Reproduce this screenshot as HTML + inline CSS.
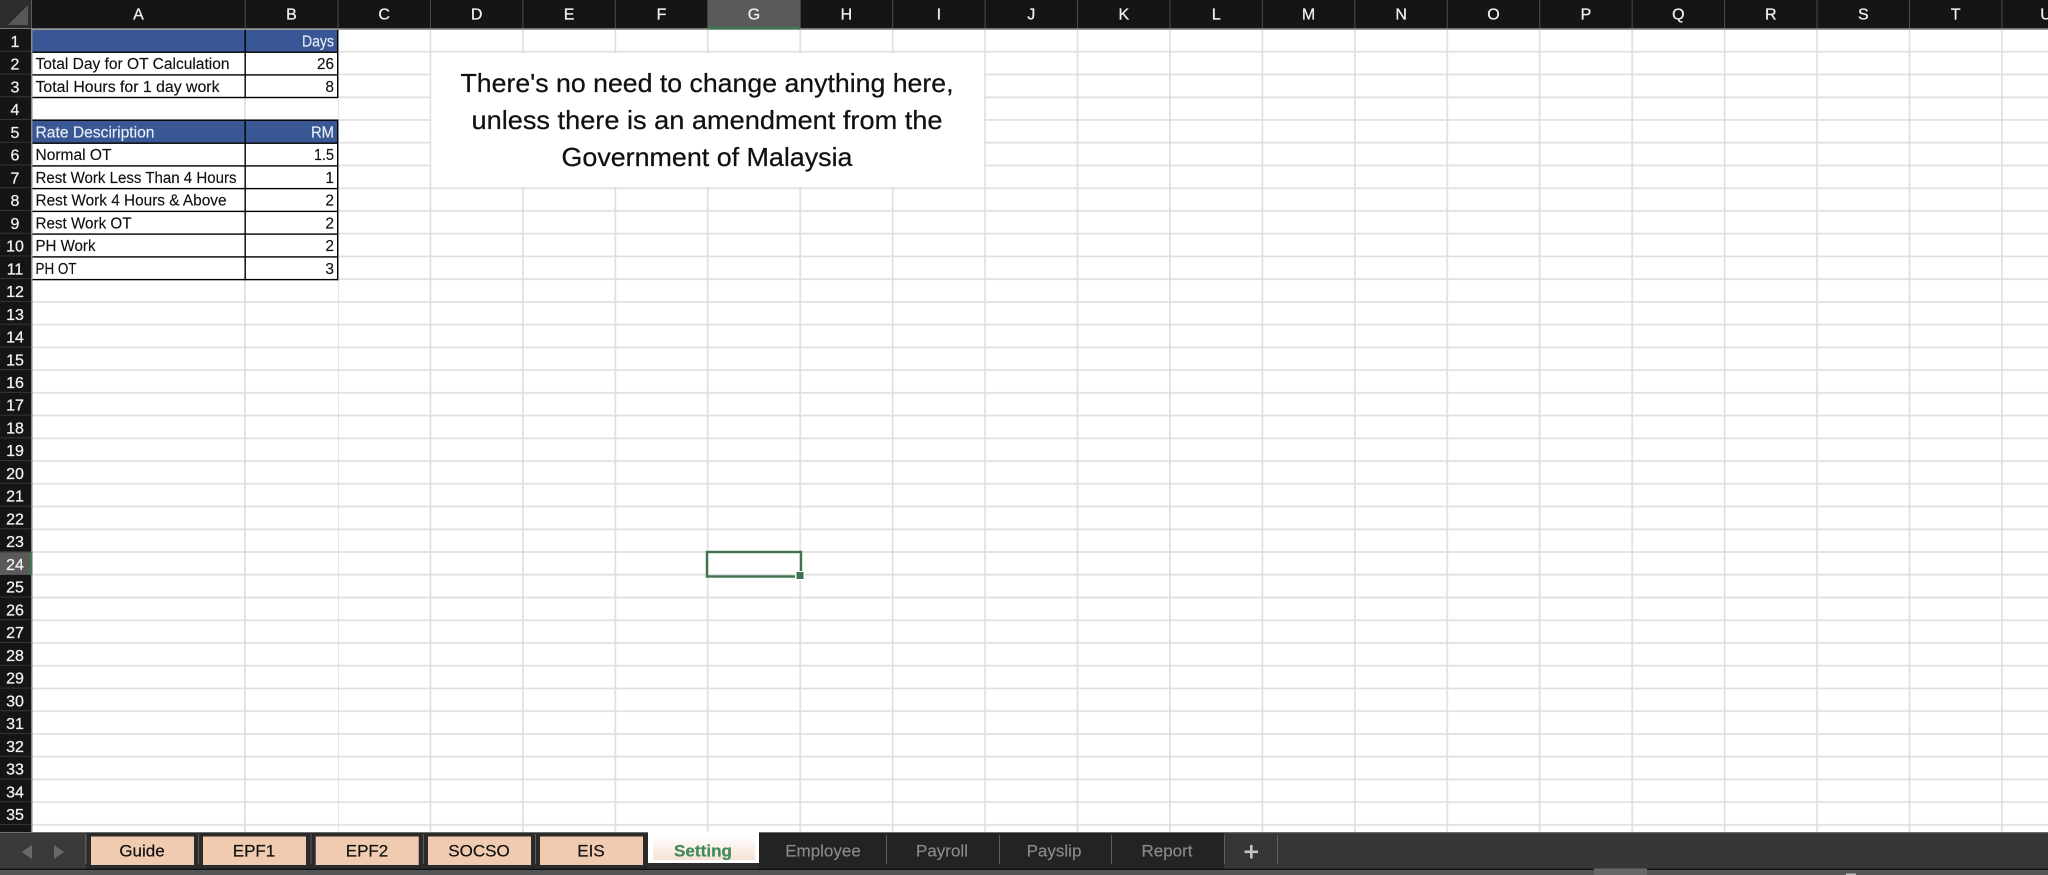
<!DOCTYPE html>
<html lang="en">
<head>
<meta charset="utf-8">
<title>Setting</title>
<style>
html,body{margin:0;padding:0;width:2048px;height:875px;overflow:hidden;background:#fff}
svg{display:block;position:absolute;left:0;top:0;filter:blur(.35px)}
text{font-family:"Liberation Sans",Arial,sans-serif}
.ch{font-size:16px;fill:#f2f2f2;stroke:#f2f2f2;stroke-width:.25px;text-anchor:middle}
.rh{font-size:16px;fill:#f2f2f2;stroke:#f2f2f2;stroke-width:.25px;text-anchor:middle}
.c{font-size:15.5px;fill:#111;stroke:#111;stroke-width:.15px}
.n{font-size:15.5px;fill:#111;stroke:#111;stroke-width:.15px;text-anchor:end}
.w{fill:#e8edf6;stroke:#e8edf6}
.tab{font-size:17px;fill:#111;stroke:#111;stroke-width:.2px;text-anchor:middle}
.off{font-size:17px;fill:#8a8a8a;stroke:#8a8a8a;stroke-width:.15px;text-anchor:middle}
.note{font-size:26px;fill:#111;stroke:#111;stroke-width:.25px;text-anchor:middle}
</style>
</head>
<body>
<svg width="2048" height="875" viewBox="0 0 2048 875" xmlns="http://www.w3.org/2000/svg">
<defs>
<pattern id="g" patternUnits="userSpaceOnUse" x="338" y="29" width="92.44" height="22.74">
<rect x="0" y="0" width="92.44" height="22.74" fill="#fff"/>
<rect x="0" y="-.8" width="92.44" height="1.6" fill="#dedede"/>
<rect x="0" y="21.94" width="92.44" height="1.6" fill="#dedede"/>
<rect x="-.8" y="0" width="1.6" height="22.74" fill="#dedede"/>
<rect x="91.64" y="0" width="1.6" height="22.74" fill="#dedede"/>
</pattern>
<pattern id="h" patternUnits="userSpaceOnUse" x="0" y="29" width="100" height="22.74">
<rect x="0" y="0" width="100" height="22.74" fill="#fff"/>
<rect x="0" y="-.8" width="100" height="1.6" fill="#dedede"/>
<rect x="0" y="21.94" width="100" height="1.6" fill="#dedede"/>
</pattern>
<pattern id="rs" patternUnits="userSpaceOnUse" x="0" y="29" width="31" height="22.74">
<rect width="31" height="22.74" fill="#151515"/>
<rect y="21.9" width="31" height="1" fill="#3c3c3c"/>
</pattern>
<pattern id="cs" patternUnits="userSpaceOnUse" x="338" y="0" width="92.44" height="29">
<rect width="92.44" height="29" fill="#151515"/>
<rect x="-0.5" width="1" height="29" fill="#4c4c4c"/>
<rect x="91.94" width="1" height="29" fill="#4c4c4c"/>
</pattern>
<linearGradient id="act" x1="0" y1="0" x2="0" y2="1">
<stop offset="0" stop-color="#ffffff"/>
<stop offset="1" stop-color="#f6e2d4"/>
</linearGradient>
</defs>

<!-- sheet grid -->
<rect x="32" y="29" width="306" height="803" fill="url(#h)"/>
<rect x="244.2" y="29" width="1.6" height="803" fill="#dedede"/>
<rect x="338" y="29" width="1710" height="803" fill="url(#g)"/>

<!-- table 1 -->
<rect x="32" y="30" width="306" height="22" fill="#395794"/>
<rect x="32" y="52" width="306" height="45" fill="#fff"/>
<g fill="#000">
<rect x="32" y="51.5" width="306" height="1.4"/>
<rect x="32" y="74.2" width="306" height="1.4"/>
<rect x="32" y="96.8" width="306" height="1.4"/>
<rect x="244.5" y="29" width="1.4" height="69"/>
<rect x="337" y="29" width="1.4" height="69"/>
</g>
<!-- table 2 -->
<rect x="32" y="120" width="306" height="23" fill="#395794"/>
<rect x="32" y="143" width="306" height="136" fill="#fff"/>
<g fill="#000">
<rect x="32" y="119.5" width="306" height="1.4"/>
<rect x="32" y="142.5" width="306" height="1.4"/>
<rect x="32" y="165.2" width="306" height="1.4"/>
<rect x="32" y="187.9" width="306" height="1.4"/>
<rect x="32" y="210.7" width="306" height="1.4"/>
<rect x="32" y="233.4" width="306" height="1.4"/>
<rect x="32" y="256.2" width="306" height="1.4"/>
<rect x="32" y="278.9" width="306" height="1.4"/>
<rect x="244.5" y="119.5" width="1.4" height="160.8"/>
<rect x="337" y="119.5" width="1.4" height="160.8"/>
</g>

<!-- column headers -->
<rect x="338" y="0" width="1710" height="29" fill="url(#cs)"/>
<rect x="0" y="0" width="338" height="29" fill="#151515"/>
<rect x="0" y="0" width="31" height="29" fill="#2c2c2c"/>
<polygon points="8,25 28,5 28,25" fill="#585858"/>
<rect x="31" y="0" width="1" height="29" fill="#5c5c5c"/>
<rect x="244.7" y="0" width="1" height="29" fill="#4c4c4c"/>
<rect x="337.5" y="0" width="1" height="29" fill="#4c4c4c"/>
<rect x="707.8" y="0" width="92.44" height="27" fill="#5a5a5a"/>
<rect x="0" y="28.2" width="2048" height="1.6" fill="#8a8a8a"/>
<rect x="707.8" y="27" width="92.44" height="2.4" fill="#3f7a52"/>

<text class="ch" x="138.5" y="19.5">A</text>
<text class="ch" x="291.5" y="19.5">B</text>
<text class="ch" x="384.2" y="19.5">C</text>
<text class="ch" x="476.7" y="19.5">D</text>
<text class="ch" x="569.1" y="19.5">E</text>
<text class="ch" x="661.5" y="19.5">F</text>
<text class="ch" x="754" y="19.5">G</text>
<text class="ch" x="846.4" y="19.5">H</text>
<text class="ch" x="938.9" y="19.5">I</text>
<text class="ch" x="1031.3" y="19.5">J</text>
<text class="ch" x="1123.8" y="19.5">K</text>
<text class="ch" x="1216.2" y="19.5">L</text>
<text class="ch" x="1308.6" y="19.5">M</text>
<text class="ch" x="1401.1" y="19.5">N</text>
<text class="ch" x="1493.5" y="19.5">O</text>
<text class="ch" x="1586" y="19.5">P</text>
<text class="ch" x="1678.4" y="19.5">Q</text>
<text class="ch" x="1770.8" y="19.5">R</text>
<text class="ch" x="1863.3" y="19.5">S</text>
<text class="ch" x="1955.7" y="19.5">T</text>
<text class="ch" x="2046" y="19.5">U</text>

<!-- row headers -->
<rect x="0" y="29" width="31" height="803" fill="url(#rs)"/>
<rect x="31" y="29" width="1.5" height="803" fill="#8a8a8a"/>
<rect x="0" y="552.2" width="31" height="22.7" fill="#5a5a5a"/>
<rect x="30" y="552.2" width="2.5" height="22.7" fill="#3f7a52"/>

<text class="rh" x="15" y="46.9">1</text>
<text class="rh" x="15" y="69.6">2</text>
<text class="rh" x="15" y="92.4">3</text>
<text class="rh" x="15" y="115.1">4</text>
<text class="rh" x="15" y="137.9">5</text>
<text class="rh" x="15" y="160.6">6</text>
<text class="rh" x="15" y="183.3">7</text>
<text class="rh" x="15" y="206.1">8</text>
<text class="rh" x="15" y="228.8">9</text>
<text class="rh" x="15" y="251.6">10</text>
<text class="rh" x="15" y="274.3">11</text>
<text class="rh" x="15" y="297">12</text>
<text class="rh" x="15" y="319.8">13</text>
<text class="rh" x="15" y="342.5">14</text>
<text class="rh" x="15" y="365.3">15</text>
<text class="rh" x="15" y="388">16</text>
<text class="rh" x="15" y="410.7">17</text>
<text class="rh" x="15" y="433.5">18</text>
<text class="rh" x="15" y="456.2">19</text>
<text class="rh" x="15" y="479">20</text>
<text class="rh" x="15" y="501.7">21</text>
<text class="rh" x="15" y="524.4">22</text>
<text class="rh" x="15" y="547.2">23</text>
<text class="rh" x="15" y="569.9">24</text>
<text class="rh" x="15" y="592.7">25</text>
<text class="rh" x="15" y="615.4">26</text>
<text class="rh" x="15" y="638.1">27</text>
<text class="rh" x="15" y="660.9">28</text>
<text class="rh" x="15" y="683.6">29</text>
<text class="rh" x="15" y="706.4">30</text>
<text class="rh" x="15" y="729.1">31</text>
<text class="rh" x="15" y="751.8">32</text>
<text class="rh" x="15" y="774.6">33</text>
<text class="rh" x="15" y="797.3">34</text>
<text class="rh" x="15" y="820.1">35</text>

<text class="n w" x="334" y="46.5" textLength="32" lengthAdjust="spacingAndGlyphs">Days</text>
<text class="c" x="35.5" y="69" textLength="194" lengthAdjust="spacingAndGlyphs">Total Day for OT Calculation</text>
<text class="n" x="334" y="69" textLength="17" lengthAdjust="spacingAndGlyphs">26</text>
<text class="c" x="35.5" y="92" textLength="184" lengthAdjust="spacingAndGlyphs">Total Hours for 1 day work</text>
<text class="n" x="334" y="92">8</text>
<text class="c w" x="35.5" y="137.4" textLength="119" lengthAdjust="spacingAndGlyphs">Rate Desciription</text>
<text class="n w" x="334" y="137.4" textLength="23" lengthAdjust="spacingAndGlyphs">RM</text>
<text class="c" x="35.5" y="160" textLength="76" lengthAdjust="spacingAndGlyphs">Normal OT</text>
<text class="n" x="334" y="160" textLength="20" lengthAdjust="spacingAndGlyphs">1.5</text>
<text class="c" x="35.5" y="183" textLength="201" lengthAdjust="spacingAndGlyphs">Rest Work Less Than 4 Hours</text>
<text class="n" x="334" y="183">1</text>
<text class="c" x="35.5" y="205.6" textLength="191" lengthAdjust="spacingAndGlyphs">Rest Work 4 Hours &amp; Above</text>
<text class="n" x="334" y="205.6">2</text>
<text class="c" x="35.5" y="228.3" textLength="96" lengthAdjust="spacingAndGlyphs">Rest Work OT</text>
<text class="n" x="334" y="228.3">2</text>
<text class="c" x="35.5" y="251" textLength="60" lengthAdjust="spacingAndGlyphs">PH Work</text>
<text class="n" x="334" y="251">2</text>
<text class="c" x="35.5" y="273.8" textLength="41" lengthAdjust="spacingAndGlyphs">PH OT</text>
<text class="n" x="334" y="273.8">3</text>

<!-- note box -->
<rect x="431.4" y="53" width="552.7" height="134" fill="#fff"/>
<text class="note" x="707" y="92" textLength="493" lengthAdjust="spacingAndGlyphs">There's no need to change anything here,</text>
<text class="note" x="707" y="129" textLength="471" lengthAdjust="spacingAndGlyphs">unless there is an amendment from the</text>
<text class="note" x="707" y="166" textLength="291" lengthAdjust="spacingAndGlyphs">Government of Malaysia</text>

<!-- selection -->
<rect x="707" y="552" width="94" height="24.5" fill="none" stroke="#3f7350" stroke-width="2.4"/>
<rect x="795" y="571" width="9.5" height="9" fill="#fff"/>
<rect x="796.5" y="572" width="7" height="7" fill="#3f7350"/>

<!-- tab bar -->
<rect x="0" y="832" width="2048" height="37" fill="#363636"/>
<rect x="0" y="832" width="648" height="1.2" fill="#6e6e6e"/>
<rect x="759" y="832" width="1289" height="1.2" fill="#6e6e6e"/>
<rect x="0" y="833" width="86" height="36" fill="#3a3a3a"/>
<polygon points="32,845 32,859 21.7,852" fill="#696969"/>
<polygon points="54,845 54,859 64,852" fill="#696969"/>

<rect x="86" y="833" width="562" height="36" fill="#2a2a2a"/>
<rect x="85" y="834" width="1.5" height="30" fill="#5a5a5a"/>
<rect x="198" y="834" width="1" height="30" fill="#5a5a5a"/>
<rect x="310.5" y="834" width="1" height="30" fill="#5a5a5a"/>
<rect x="423" y="834" width="1" height="30" fill="#5a5a5a"/>
<rect x="535" y="834" width="1" height="30" fill="#5a5a5a"/>

<rect x="91" y="836.5" width="103" height="28.5" fill="#f0cbb0"/>
<rect x="203" y="836.5" width="103" height="28.5" fill="#f0cbb0"/>
<rect x="315.7" y="836.5" width="103" height="28.5" fill="#f0cbb0"/>
<rect x="428" y="836.5" width="103" height="28.5" fill="#f0cbb0"/>
<rect x="540" y="836.5" width="103" height="28.5" fill="#f0cbb0"/>
<text class="tab" x="142" y="856.5">Guide</text>
<text class="tab" x="254" y="856.5">EPF1</text>
<text class="tab" x="367" y="856.5">EPF2</text>
<text class="tab" x="479" y="856.5">SOCSO</text>
<text class="tab" x="591" y="856.5">EIS</text>

<rect x="759" y="833" width="465" height="36" fill="#232323"/>
<rect x="648" y="832" width="111" height="31" fill="#fff"/>
<rect x="653" y="836" width="102" height="24" fill="url(#act)"/>
<rect x="648" y="863" width="111" height="6" fill="#2e2e2e"/>
<text class="tab" x="703" y="856.5" style="fill:#418a5c;stroke:#418a5c;font-weight:bold" textLength="58" lengthAdjust="spacingAndGlyphs">Setting</text>
<text class="off" x="823" y="856.5">Employee</text>
<text class="off" x="942" y="856.5">Payroll</text>
<text class="off" x="1054" y="856.5">Payslip</text>
<text class="off" x="1167" y="856.5">Report</text>
<rect x="886" y="835" width="1" height="29" fill="#5f5f5f"/>
<rect x="999" y="835" width="1" height="29" fill="#5f5f5f"/>
<rect x="1111" y="835" width="1" height="29" fill="#5f5f5f"/>
<rect x="1224" y="835" width="1" height="29" fill="#5f5f5f"/>
<rect x="1277" y="835" width="1" height="29" fill="#5f5f5f"/>
<rect x="1244.5" y="850.5" width="13.5" height="2.6" fill="#c4c4c4"/>
<rect x="1250" y="845" width="2.6" height="13.5" fill="#c4c4c4"/>

<!-- bottom strip -->
<rect x="0" y="869" width="2048" height="6" fill="#565656"/>
<rect x="0" y="868.7" width="2048" height="1.3" fill="#111"/>
<rect x="1594" y="868.5" width="53" height="6.5" fill="#686868"/>
<rect x="1846" y="873.5" width="10" height="1.5" fill="#bdbdbd"/>
</svg>
</body>
</html>
